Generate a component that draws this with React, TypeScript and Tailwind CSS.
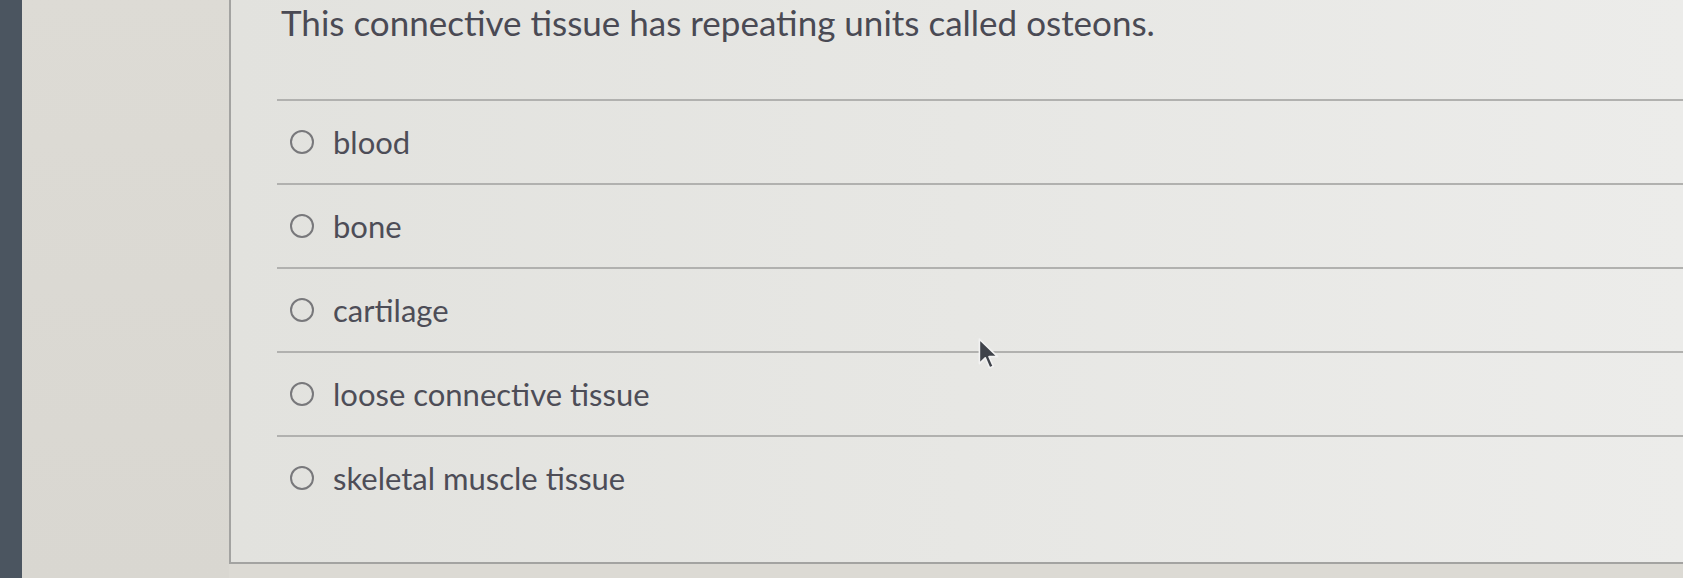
import React from 'react';

const options = ['blood', 'bone', 'cartilage', 'loose connective tissue', 'skeletal muscle tissue'];

const Radio: React.FC = () => (
  <span className="block w-[24px] h-[24px] rounded-full border-[2px] border-[#78787b] shrink-0" />
);

const Cursor: React.FC = () => (
  <svg
    className="absolute left-[978px] top-[338px]"
    width="22"
    height="32"
    viewBox="0 0 20 30"
  >
    <path d="M1 1 L1 24 L6.5 18.5 L10.5 28 L14 26.5 L10 17.5 L18 17.5 Z" fill="#3f434a" stroke="#f2f2f2" strokeWidth="1.5" strokeLinejoin="round" />
  </svg>
);

const App: React.FC = () => {
  return (
    <div
      className="relative flex w-[1683px] h-[578px] overflow-hidden bg-[#dcdad4]"
      style={{ fontFamily: 'Lato, "Open Sans", sans-serif' }}
    >
      <div className="w-[22px] shrink-0 bg-[#4b5560]" />
      <div className="w-[207px] shrink-0 bg-gradient-to-b from-[#dddbd5] to-[#d9d7d1]" />
      <div className="flex-1 h-[564px] border-l-2 border-b-2 border-[#a3a3a1] bg-gradient-to-r from-[#e2e2de] via-[#e7e7e4] to-[#ececea] pl-[46px]">
        <div className="h-[99px] pl-[4px]">
          <h1 className="text-[35px] leading-[44px] text-[#4a4a54]">
            This connective tissue has repeating units called osteons.
          </h1>
        </div>
        <ul>
          {options.map((opt) => (
            <li
              key={opt}
              className="flex items-center h-[84px] border-t-2 border-[#b1b1af] pl-[13px] gap-[19px]"
            >
              <Radio />
              <span className="text-[31px] leading-[40px] text-[#4d4d57]">{opt}</span>
            </li>
          ))}
        </ul>
      </div>
      <Cursor />
    </div>
  );
};

export default App;
